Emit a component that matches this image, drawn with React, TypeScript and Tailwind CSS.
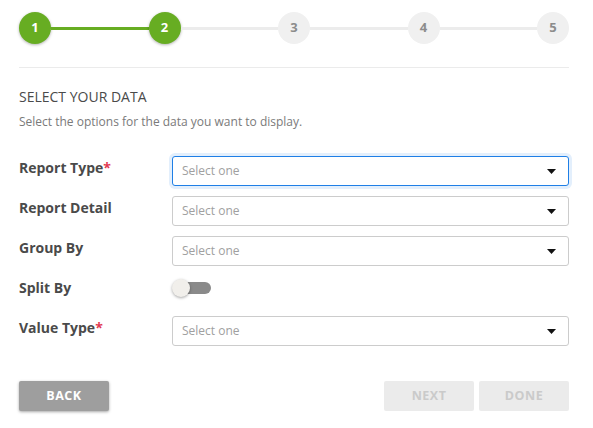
import { ReactNode } from 'react';

const steps = [1, 2, 3, 4, 5];
const current = 2;

function Caret() {
  return (
    <svg width="9" height="5" viewBox="0 0 9 5" className="shrink-0">
      <path d="M0 0h9L4.5 5z" fill="#111" />
    </svg>
  );
}

function SelectBox({ focused = false }: { focused?: boolean }) {
  return (
    <div
      className={
        focused
          ? 'flex h-[30px] flex-1 items-center justify-between rounded-[3px] border border-[#1f7fe6] bg-white pl-[9px] pr-[12px] shadow-[0_0_0_3px_#e3effc]'
          : 'flex h-[30px] flex-1 items-center justify-between rounded-[3px] border border-[#cccccc] bg-white pl-[9px] pr-[12px]'
      }
    >
      <span className="text-[12px] text-[#a0a0a0]">Select one</span>
      <Caret />
    </div>
  );
}

function Row({ label, required, children }: { label: string; required?: boolean; children: ReactNode }) {
  return (
    <div className="flex h-[30px] items-center">
      <div className="w-[153px] shrink-0 -mt-[8px] text-[14px] font-bold text-[#4a4a4a]">
        {label}
        {required && <span className="text-[#e23a52]">*</span>}
      </div>
      {children}
    </div>
  );
}

export default function App() {
  return (
    <div className="w-[593px] h-[428px] bg-white pl-[19px] pr-[24px] pt-[12px]" style={{ fontFamily: '"Open Sans", sans-serif' }}>
      <div className="flex items-center">
        {steps.map((s, i) => (
          <div key={s} className={i === 0 ? 'flex items-center' : 'flex flex-1 items-center'}>
            {i > 0 && <div className={s <= current ? 'h-[3px] flex-1 bg-[#67ad22]' : 'h-[3px] flex-1 bg-[#ececec]'} />}
            <div
              className={
                s <= current
                  ? 'flex h-[32px] w-[32px] items-center justify-center rounded-full bg-[#67ad22] text-[13px] font-bold text-white shadow-[0_1px_3px_rgba(0,0,0,0.3)]'
                  : 'flex h-[32px] w-[32px] items-center justify-center rounded-full bg-[#f0f0f0] text-[13px] font-bold text-[#8c8c8c]'
              }
            >
              {s}
            </div>
          </div>
        ))}
      </div>

      <div className="mt-[23px] h-px bg-[#ebebeb]" />

      <div className="mt-[19px] text-[14px] font-normal leading-[20px] text-[#4a4a4a]">SELECT YOUR DATA</div>
      <div className="mt-[7px] text-[12px] leading-[16px] text-[#7a7a7a]">Select the options for the data you want to display.</div>

      <div className="mt-[26px] flex flex-col gap-[10px]">
        <Row label="Report Type" required>
          <SelectBox focused />
        </Row>
        <Row label="Report Detail">
          <SelectBox />
        </Row>
        <Row label="Group By">
          <SelectBox />
        </Row>
        <Row label="Split By">
          <div className="relative -mt-[6px] h-[18px] w-[39px]">
            <div className="absolute left-[2px] top-[3px] h-[12px] w-[37px] rounded-full bg-[#8a8a8a]" />
            <div className="absolute left-0 top-0 h-[18px] w-[18px] rounded-full bg-[#f1efeb] shadow-[0_1px_3px_rgba(0,0,0,0.35)]" />
          </div>
        </Row>
        <Row label="Value Type" required>
          <SelectBox />
        </Row>
      </div>

      <div className="mt-[35px] flex items-center">
        <button className="h-[30px] w-[90px] rounded-[2px] bg-[#9e9e9e] text-[12.5px] font-bold tracking-[0.5px] text-white shadow-[0_1px_3px_rgba(0,0,0,0.35)]">
          BACK
        </button>
        <div className="flex-1" />
        <button className="h-[30px] w-[90px] rounded-[2px] bg-[#ebebeb] text-[12.5px] font-bold tracking-[0.5px] text-[#cacaca]">NEXT</button>
        <button className="ml-[5px] h-[30px] w-[90px] rounded-[2px] bg-[#ebebeb] text-[12.5px] font-bold tracking-[0.5px] text-[#cacaca]">DONE</button>
      </div>
    </div>
  );
}
